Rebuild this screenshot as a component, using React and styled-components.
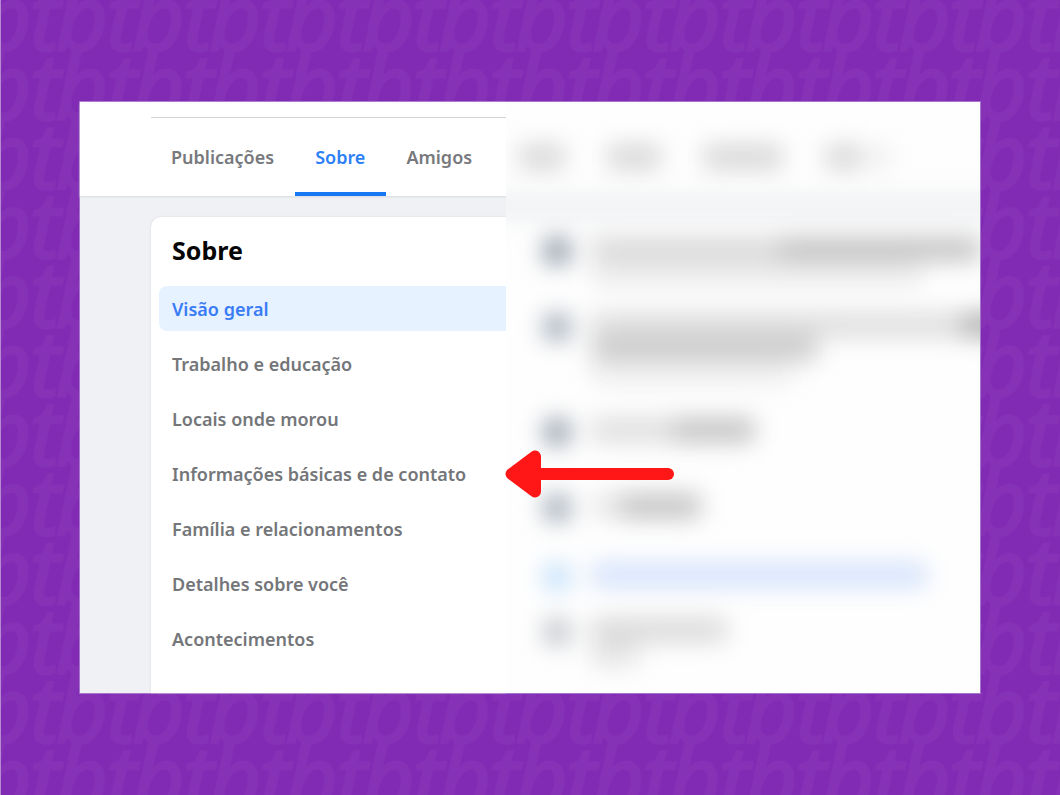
import React, { useState } from "react";
import styled, { createGlobalStyle } from "styled-components";

const tabs = ["Publicações", "Sobre", "Amigos"];

const sections = [
  "Visão geral",
  "Trabalho e educação",
  "Locais onde morou",
  "Informações básicas e de contato",
  "Família e relacionamentos",
  "Detalhes sobre você",
  "Acontecimentos"
];

const hiddenTabs = [44, 52, 78];

// each line is a list of [width, color] pieces
const hiddenRows = [
  {
    icon: "#748291",
    height: 76,
    lines: [
      [[188, "#d6d6d6"], [200, "#bcbebc"]],
      [[330, "#e9e9e9"]]
    ]
  },
  {
    icon: "#8c98a6",
    height: 105,
    lines: [
      [[370, "#d9d9d9"], [50, "#a8a8a8"]],
      [[225, "#c6c8c6"]],
      [[200, "#eeeeee"]]
    ]
  },
  { icon: "#7e8b99", height: 76, lines: [[[82, "#dadada"], [80, "#bcbcbc"]]] },
  { icon: "#8c98a6", height: 69, lines: [[[28, "#e6e6e6"], [80, "#bcbcbc"]]] },
  { icon: "#b6dafa", height: 55, lines: [[[334, "#cfdffb"]]] },
  {
    icon: "#b3b8bf",
    height: 64,
    lines: [[[134, "#d5d5d5"]], [[46, "#e2e2e2"]]]
  }
];

const letterSpots = [-1, 0, 1].flatMap(col => [0, 1, 2].map(row => [col, row]));

const Backdrop = () => (
  <BackdropSvg aria-hidden="true">
    <defs>
      <pattern
        id="tb"
        width="76.6"
        height="69.2"
        y="-19"
        patternUnits="userSpaceOnUse"
      >
        {letterSpots.map(([col, row]) => (
          <g
            key={`${col}${row}`}
            transform={`translate(${col * 76.6} ${row * 69.2})`}
          >
            <text x="29" y="0">
              t
            </text>
            <text x="55" y="0">
              b
            </text>
          </g>
        ))}
      </pattern>
    </defs>
    <rect width="100%" height="100%" fill="url(#tb)" stroke="none" />
  </BackdropSvg>
);

const Arrow = () => (
  <ArrowSvg viewBox="0 0 170 48" aria-hidden="true">
    <path d="M30 24H163" stroke="#ff1717" strokeWidth="12" strokeLinecap="round" />
    <path
      d="M6.500 24L30 6.500V41.500Z"
      fill="#ff1717"
      stroke="#ff1717"
      strokeWidth="12"
      strokeLinejoin="round"
    />
  </ArrowSvg>
);

function App() {
  const [currentTab, setCurrentTab] = useState("Sobre");
  const [currentSection, setCurrentSection] = useState("Visão geral");

  return (
    <Page>
      <GlobalStyle />
      <Backdrop />
      <Card>
        <ProfilePane>
          <TabBar>
            <TabList>
              {tabs.map(tab => (
                <Tab
                  key={tab}
                  $active={tab === currentTab}
                  onClick={() => setCurrentTab(tab)}
                >
                  {tab}
                </Tab>
              ))}
            </TabList>
          </TabBar>
          <Sidebar>
            <Title>Sobre</Title>
            <Menu>
              {sections.map((section, index) => (
                <MenuItem key={section}>
                  <MenuButton
                    $active={section === currentSection}
                    onClick={() => setCurrentSection(section)}
                  >
                    {section}
                  </MenuButton>
                  {index === 3 && <Arrow />}
                </MenuItem>
              ))}
            </Menu>
          </Sidebar>
        </ProfilePane>
        <HiddenPane aria-hidden="true">
          <HiddenTabBar>
            {hiddenTabs.map(width => (
              <Bar key={width} $width={width} $color="#d2d2d2" />
            ))}
            <HiddenMore>
              <Bar $width={36} $color="#d2d2d2" />
              <Bar $width={14} $color="#e6e6e6" />
            </HiddenMore>
          </HiddenTabBar>
          <HiddenGap />
          <HiddenList>
            {hiddenRows.map((row, index) => (
              <HiddenRow key={index} $height={row.height}>
                <Dot $color={row.icon} />
                <div>
                  {row.lines.map((line, lineIndex) => (
                    <HiddenLine key={lineIndex}>
                      {line.map(([width, color]) => (
                        <Bar key={width} $width={width} $color={color} />
                      ))}
                    </HiddenLine>
                  ))}
                </div>
              </HiddenRow>
            ))}
          </HiddenList>
        </HiddenPane>
      </Card>
    </Page>
  );
}

const GlobalStyle = createGlobalStyle`
  * {
    box-sizing: border-box;
  }

  body {
    margin: 0;
    background: #812ab4;
    font-family: "Noto Sans", "Open Sans", sans-serif;
  }

  button {
    border: 0;
    padding: 0;
    background: none;
    font: inherit;
    cursor: pointer;
  }
`;

const Page = styled.main`
  position: relative;
  min-height: 100vh;
  padding: 102px 80px;
  box-shadow: inset 1px 0 #b78bd3;
`;

const BackdropSvg = styled.svg`
  position: absolute;
  inset: 0 0 0 1px;
  width: 100%;
  height: 100%;
  fill: #8532b6;
  stroke: #8532b6;
  stroke-width: 3px;
  font-family: "Open Sans", sans-serif;
  font-size: 90px;
  font-style: italic;
  font-weight: 500;
`;

const Card = styled.div`
  position: relative;
  display: flex;
  background: #fff;
  box-shadow: 0 0 0 1px #a873cd;
`;

const ProfilePane = styled.div`
  flex: 0 0 426px;
  display: flex;
  flex-direction: column;
  background: #f0f1f5;
`;

const TabBar = styled.nav`
  padding: 15px 0 0 71px;
  background: #fff;
  box-shadow: 0 1px 2px #d9dbdf;
`;

const TabList = styled.div`
  display: flex;
  height: 79px;
  border-top: 1px solid #d3d4d6;
`;

const Tab = styled.button`
  padding: 4px 21px 0 20px;
  border-bottom: 4px solid ${({ $active }) => ($active ? "#1877f2" : "transparent")};
  color: ${({ $active }) => ($active ? "#2d80f6" : "#77797d")};
  font-size: 18px;
  font-weight: 600;
`;

const Sidebar = styled.section`
  flex: 1;
  margin: 21px 0 0 71px;
  padding: 15px 0 32px 8px;
  background: #fff;
  border-radius: 10px 0 0 0;
  box-shadow: 0 0 2px #d4d6da;
`;

const Title = styled.h1`
  margin: 0 0 18px;
  padding-left: 13px;
  color: #050505;
  font-size: 25px;
  font-weight: 700;
  line-height: 36px;
`;

const Menu = styled.ul`
  display: grid;
  gap: 10px;
  margin: 0;
  padding: 0;
  list-style: none;
`;

const MenuItem = styled.li`
  position: relative;
`;

const MenuButton = styled.button`
  display: block;
  width: 100%;
  height: 45px;
  padding: 0 13px;
  border-radius: 8px 0 0 8px;
  background: ${({ $active }) => ($active ? "#e6f2ff" : "none")};
  color: ${({ $active }) => ($active ? "#3a7bf6" : "#747679")};
  font-size: 18px;
  font-weight: 600;
  text-align: left;
  white-space: nowrap;
`;

const ArrowSvg = styled.svg`
  position: absolute;
  bottom: -2px;
  left: calc(100% - 1px);
  z-index: 1;
  width: 170px;
  height: 48px;
  fill: none;
`;

const HiddenPane = styled.div`
  flex: 1;
  min-width: 0;
  overflow: hidden;
  background: #fefefe;
`;

const HiddenTabBar = styled.div`
  display: flex;
  align-items: center;
  gap: 44px;
  height: 94px;
  padding: 16px 14px 0;
  filter: blur(12px);
`;

const HiddenMore = styled.div`
  display: flex;
  gap: 12px;
`;

const HiddenGap = styled.div`
  height: 21px;
  margin: 0 -40px;
  background: #eceef1;
  filter: blur(12px);
`;

const HiddenList = styled.div`
  padding: 21px 0 0 38px;
  filter: blur(12px);
`;

const HiddenRow = styled.div`
  display: flex;
  gap: 22px;
  height: ${({ $height }) => $height}px;
`;

const HiddenLine = styled.div`
  display: flex;
  height: 24px;
`;

const Bar = styled.span`
  flex: none;
  width: ${({ $width }) => $width}px;
  height: 22px;
  background: ${({ $color }) => $color};
`;

const Dot = styled.span`
  flex: none;
  width: 26px;
  height: 26px;
  border-radius: 50%;
  background: ${({ $color }) => $color};
`;

export default App;
